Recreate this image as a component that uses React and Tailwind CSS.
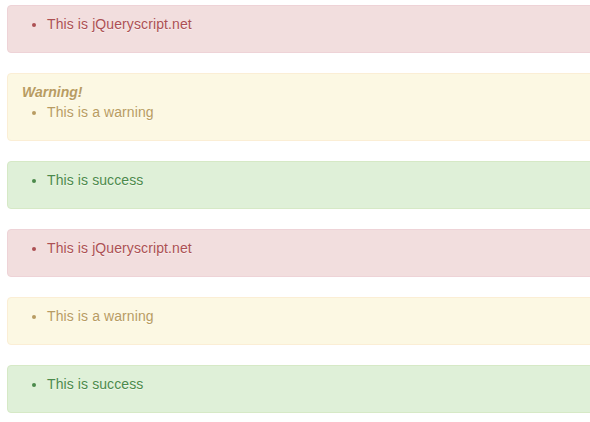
const alerts = [
  { kind: "error", text: "This is jQueryscript.net" },
  { kind: "warning", title: "Warning!", text: "This is a warning" },
  { kind: "success", text: "This is success" },
  { kind: "error", text: "This is jQueryscript.net" },
  { kind: "warning", text: "This is a warning" },
  { kind: "success", text: "This is success" },
];

const styles = {
  error: "bg-[#f2dede] border-[#eed3d7] text-[#ad5053]",
  warning: "bg-[#fcf8e3] border-[#fbeed5] text-[#b89c62]",
  success: "bg-[#dff0d8] border-[#d6e9c6] text-[#4b8a4b]",
};

function Alert({ kind, title, text }) {
  return (
    <div
      className={`w-[620px] mb-5 border rounded-[4px] pt-2 pb-2 pl-[14px] pr-[35px] text-[14px] leading-5 [text-shadow:0_1px_0_rgba(255,255,255,0.5)] ${styles[kind]}`}
    >
      {title && <strong className="block italic font-bold">{title}</strong>}
      <ul className="list-disc ml-[25px] mb-[10px] tracking-[0.1px]">
        <li>{text}</li>
      </ul>
    </div>
  );
}

export default function App() {
  return (
    <div className="w-[590px] h-[422px] overflow-hidden bg-white pl-[7px] pt-[5px] font-['Liberation_Sans',Arial,sans-serif]">
      {alerts.map((a, i) => (
        <Alert key={i} {...a} />
      ))}
    </div>
  );
}
